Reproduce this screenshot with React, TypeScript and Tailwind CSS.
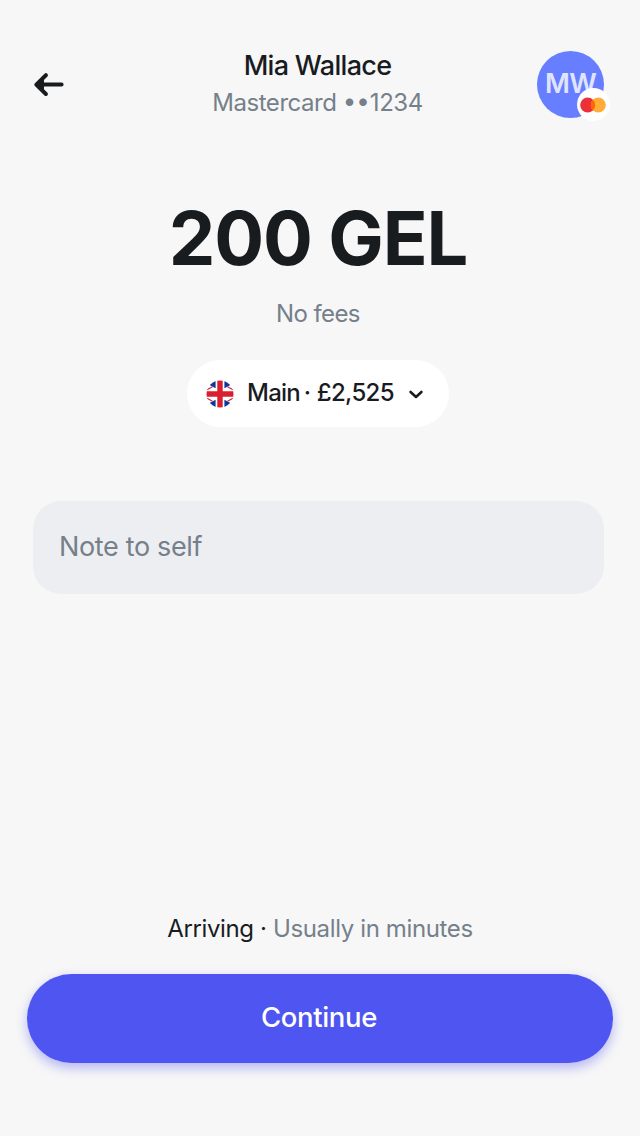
function BackArrow() {
  return (
    <svg className="h-8 w-8" viewBox="0 0 32 32" fill="none" stroke="currentColor" strokeWidth="4" strokeLinecap="round" strokeLinejoin="round">
      <path d="M29.6 15.6H4.5M13.9 6.2L4.3 15.6L13.9 25" />
      <path d="M5 15.6L12 10.5V20.7z" fill="currentColor" stroke="none" />
    </svg>
  );
}

function ChevronDown() {
  return (
    <svg className="h-4 w-4" viewBox="0 0 16 16" fill="none" stroke="currentColor" strokeWidth="2.6" strokeLinecap="round" strokeLinejoin="round">
      <path d="M2.6 6L8 11L13.4 6" />
    </svg>
  );
}

function UkFlag() {
  return (
    <svg className="h-7 w-7" viewBox="0 0 28 28">
      <clipPath id="flag-circle">
        <circle cx="14" cy="14" r="13.5" />
      </clipPath>
      <g clipPath="url(#flag-circle)">
        <path fill="#fff" d="M0 0h28v28H0z" />
        <path fill="#0a3aa0" d="M9.6 0v8.2L2.6 4.6L5 0zM18.4 0v8.2l7-3.6L23 0zM9.6 28v-8.2l-7 3.6L5 28zM18.4 28v-8.2l7 3.6L23 28z" />
        <path stroke="#d91f35" strokeWidth="1.2" d="M1 9.8l5.5-3M27 9.8l-5.5-3M1 18.2l5.5 3M27 18.2l-5.5 3" />
        <path fill="#d91f2e" d="M11.3 0h5.4v11.3H28v5.4H16.7V28h-5.4V16.7H0v-5.4h11.3z" />
      </g>
    </svg>
  );
}

function Avatar() {
  return (
    <div className="relative flex h-[67px] w-[67px] items-center justify-center rounded-full bg-[#667eff] text-[27px] font-semibold tracking-[-0.7px] text-[#e0e5ff]">
      MW
      <div className="absolute top-[37px] left-[39.5px] flex h-[33px] w-[33px] items-center justify-center rounded-full bg-white">
        <svg className="h-4 w-[26px]" viewBox="0 0 26 16">
          <circle cx="7.7" cy="8" r="7.5" fill="#eb3037" />
          <circle cx="18.3" cy="8" r="7.5" fill="#ffac38" />
          <path fill="#ff6500" d="M13 2.7a7.5 7.5 0 0 1 0 10.6a7.5 7.5 0 0 1 0-10.6z" />
        </svg>
      </div>
    </div>
  );
}

export default function App() {
  return (
    <main className="flex h-[1136px] w-[640px] flex-col bg-[#f7f7f7] font-['Inter',sans-serif] text-[#191c1f]">
      <header className="flex items-start justify-between pt-[51px] pr-9 pl-8">
        <button className="mt-[18px] mr-[35px]" aria-label="Back">
          <BackArrow />
        </button>
        <div className="-mt-[3px] text-center">
          <h1 className="-ml-px text-[27px] leading-9 font-medium tracking-[-0.7px]">Mia Wallace</h1>
          <p className="-ml-px text-2xl leading-[38px] tracking-[-0.45px] text-[#75808a]">
            Mastercard <span className="tracking-normal [font-feature-settings:'case']">••</span>1234
          </p>
        </div>
        <Avatar />
      </header>

      <section className="flex flex-col items-center pr-1 pt-[75px]">
        <div className="text-[74px] leading-[82px] font-bold tracking-[-1.1px]">200 GEL</div>
        <p className="mt-[19px] text-2xl leading-8 tracking-[-0.6px] text-[#75808a]">No fees</p>
        <button className="mt-[30px] flex h-[67px] w-[262px] items-center rounded-full bg-white pl-[19px]">
          <UkFlag />
          <span className="-mt-px ml-[13px] text-2xl font-medium tracking-[-0.75px] whitespace-nowrap">
            Main<span className="-ml-[2px]"> · </span>
            <span className="ml-px tracking-[-0.7px]">£2,525</span>
          </span>
          <span className="ml-[14px]">
            <ChevronDown />
          </span>
        </button>
      </section>

      <div className="mt-[74px] ml-[33px] w-[571px]">
        <input
          className="h-[93px] w-full rounded-[28px] bg-[#edeef2] px-[26px] pb-[2px] text-[27px] tracking-[-0.35px] placeholder:text-[#75808a] placeholder:opacity-100"
          placeholder="Note to self"
        />
      </div>

      <footer className="mt-auto px-[27px] pb-[73px]">
        <p className="mb-[29px] text-center text-2xl leading-8 tracking-[-0.37px]">
          Arriving · <span className="text-[#75808a]">Usually in minutes</span>
        </p>
        <button className="h-[89px] w-full rounded-full bg-[#4f55f1] pr-[2px] pb-[2px] text-[27.5px] font-medium tracking-[-0.35px] text-white shadow-[0_5px_12px_rgba(79,85,241,0.4)]">
          Continue
        </button>
      </footer>
    </main>
  );
}
